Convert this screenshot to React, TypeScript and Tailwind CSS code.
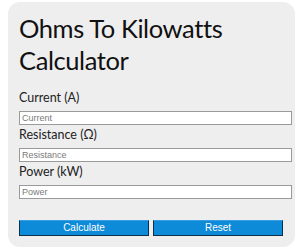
const FIELDS = [
  { label: 'Current (A)', placeholder: 'Current' },
  { label: 'Resistance (Ω)', placeholder: 'Resistance' },
  { label: 'Power (kW)', placeholder: 'Power' },
];

export default function App() {
  return (
    <div className="h-[250px] w-[300px] bg-white pl-[8px] pt-[2px]">
      <div className="flex w-[287px] flex-col rounded-[12px] bg-[#eeeeee] pb-[11px] pl-[11px] pr-[3px] pt-[10px]">
        <h1 className="font-['Lato',sans-serif] text-[25.5px] leading-[32px] font-normal tracking-[-0.4px] text-[#111]">
          Ohms To Kilowatts Calculator
        </h1>
        <div className="mt-[12px] flex flex-col">
          {FIELDS.map((f) => (
            <div key={f.label} className="mt-[1px] flex flex-col">
              <label className="font-['Lato',sans-serif] text-[12.5px] leading-[18px] text-[#222]">{f.label}</label>
              <input
                placeholder={f.placeholder}
                className="mt-[4px] h-[14px] w-[273px] border border-[#9a9a9a] bg-white px-[2px] font-['Liberation_Sans',Arial,sans-serif] text-[9px] leading-[12px] outline-none placeholder:text-[#7a7a7a]"
              />
            </div>
          ))}
        </div>
        <div className="mt-[21px] flex gap-[4px]">
          <button className="h-[16px] w-[130px] border border-[#0e2f47] border-t-[#3a9ee0] bg-[#0d8ad8] font-['Liberation_Sans',Arial,sans-serif] text-[10px] leading-[12px] text-white">
            Calculate
          </button>
          <button className="h-[16px] w-[130px] border border-[#0e2f47] border-t-[#3a9ee0] bg-[#0d8ad8] font-['Liberation_Sans',Arial,sans-serif] text-[10px] leading-[12px] text-white">
            Reset
          </button>
        </div>
      </div>
    </div>
  );
}
